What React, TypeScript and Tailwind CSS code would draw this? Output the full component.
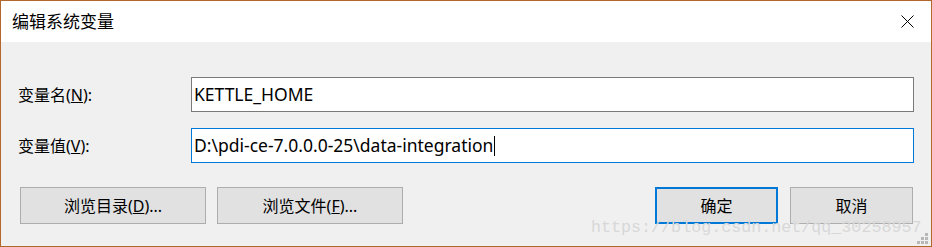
const ui = "font-['Noto_Sans','Noto_Sans_CJK_SC',sans-serif]"

const Btn = ({ children, primary, className }: { children: React.ReactNode; primary?: boolean; className: string }) => (
    <button
        className={`h-[37px] bg-[#e1e1e1] text-[16px] text-black flex items-center justify-center ${
            primary ? "border-2 border-[#0078d7]" : "border border-[#adadad]"
        } ${className}`}
    >
        {children}
    </button>
)

export default function App() {
    return (
        <div className={`${ui} w-[932px] h-[247px] border border-[#b3682b] bg-[#f0f0f0] flex flex-col relative overflow-hidden`}>
            {/* title bar */}
            <div className="h-[41px] bg-white flex items-center justify-between pl-[11px] pr-[16px]">
                <span className="text-[17px] text-black">编辑系统变量</span>
                <svg width="13" height="13" viewBox="0 0 13 13" className="mr-[1px]">
                    <path d="M0.5 0.5 L12.5 12.5 M12.5 0.5 L0.5 12.5" stroke="#000" strokeWidth="1" />
                </svg>
            </div>

            {/* fields */}
            <div className="flex flex-col gap-[16px] mt-[35px] pl-[17px] pr-[17px]">
                <div className="flex items-center">
                    <label className="w-[173px] text-[16px] text-black">
                        变量名(<span className="underline">N</span>):
                    </label>
                    <div className="flex-1 h-[35px] bg-white border border-[#7a7a7a] flex items-center pl-[2px] text-[17.5px] text-black">
                        KETTLE_HOME
                    </div>
                </div>
                <div className="flex items-center">
                    <label className="w-[173px] text-[16px] text-black">
                        变量值(<span className="underline">V</span>):
                    </label>
                    <div className="flex-1 h-[35px] bg-white border border-[#0078d7] flex items-center pl-[2px] text-[17.5px] text-black">
                        D:\pdi-ce-7.0.0.0-25\data-integration
                        <span className="w-px h-[20px] bg-black ml-[1px]" />
                    </div>
                </div>
            </div>

            {/* buttons */}
            <div className="flex items-center mt-[24px] pl-[19px] pr-[18px]">
                <Btn className="w-[186px]">
                    浏览目录(<span className="underline">D</span>)...
                </Btn>
                <Btn className="w-[186px] ml-[11px]">
                    浏览文件(<span className="underline">F</span>)...
                </Btn>
                <div className="flex-1" />
                <Btn primary className="w-[123px]">确定</Btn>
                <Btn className="w-[123px] ml-[12px]">取消</Btn>
            </div>

            {/* watermark */}
            <span className="absolute left-[590px] top-[214px] font-['Liberation_Mono',monospace] text-[16.7px] text-[#d8d8d8] pointer-events-none">
                https://blog.csdn.net/qq_30258957
            </span>

            {/* resize grip */}
            <svg width="12" height="12" viewBox="0 0 12 12" className="absolute right-[2px] bottom-[1px]">
                <rect x="8" y="0" width="3" height="3" fill="#b8b8b8" />
                <rect x="4" y="4" width="3" height="3" fill="#b8b8b8" />
                <rect x="8" y="4" width="3" height="3" fill="#b8b8b8" />
                <rect x="0" y="8" width="3" height="3" fill="#b8b8b8" />
                <rect x="4" y="8" width="3" height="3" fill="#b8b8b8" />
                <rect x="8" y="8" width="3" height="3" fill="#b8b8b8" />
            </svg>
        </div>
    )
}
